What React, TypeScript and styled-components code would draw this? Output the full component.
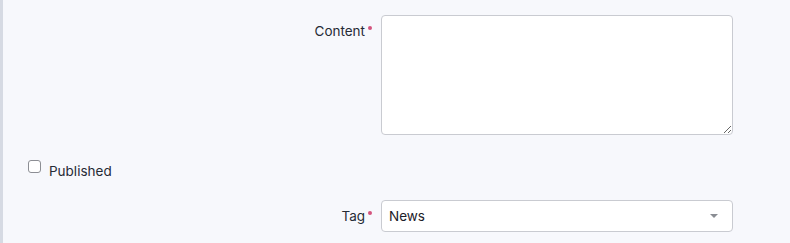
import styled, { createGlobalStyle } from 'styled-components';

const GlobalStyle = createGlobalStyle`
  html, body {
    margin: 0;
    padding: 0;
    background: #f7f8fc;
  }
  body {
    font-family: Inter, "Liberation Sans", sans-serif;
    color: #262b36;
  }
`;

type FieldProps = {
  label: string;
  required?: boolean;
  offset?: number;
  children: React.ReactNode;
};

const Field: React.FC<FieldProps> = ({ label, required, offset = 0, children }) => (
  <FieldRow $offset={offset}>
    <Label>
      {label}
      {required && <Required />}
    </Label>
    <Control>{children}</Control>
  </FieldRow>
);

const App = () => {
  return (
    <>
      <GlobalStyle />
      <Page>
        <Form>
          <Field label='Content' required>
            <TextArea />
          </Field>
          <CheckRow>
            <CheckBox type='checkbox' id='published' />
            <CheckLabel htmlFor='published'>Published</CheckLabel>
          </CheckRow>
          <Field label='Tag' required offset={20}>
            <SelectBox>
              <span>News</span>
              <Caret />
            </SelectBox>
          </Field>
        </Form>
      </Page>
    </>
  );
};

const Page = styled.div`
  min-height: 243px;
  border-left: 3px solid #d6dae3;
  box-sizing: border-box;
  background: #f7f8fc;
`;

const Form = styled.div`
  display: flex;
  flex-direction: column;
  padding-top: 15px;
`;

const FieldRow = styled.div<{ $offset: number }>`
  display: grid;
  grid-template-columns: 369px 352px;
  column-gap: 9px;
  align-items: start;
  margin-top: ${(p) => p.$offset}px;
`;

const Label = styled.div`
  display: flex;
  justify-content: flex-end;
  align-items: flex-start;
  padding-top: 8px;
  font-size: 13.5px;
  line-height: 16px;
`;

const Required = styled.span`
  display: inline-block;
  width: 4px;
  height: 4px;
  border-radius: 50%;
  background: #d4547e;
  margin-left: 3px;
  margin-top: 3px;
`;

const Control = styled.div`
  display: flex;
`;

const TextArea = styled.textarea`
  width: 352px;
  height: 120px;
  box-sizing: border-box;
  border: 1px solid #c9cbd1;
  border-radius: 4px;
  background: #fff;
  font-family: inherit;
  font-size: 13px;
  padding: 6px 8px;
  margin: 0;
  outline: none;
`;

const CheckRow = styled.div`
  display: flex;
  align-items: flex-start;
  gap: 8px;
  padding-left: 25px;
  margin-top: 25px;
  height: 20px;
`;

const CheckBox = styled.input`
  appearance: none;
  width: 13px;
  height: 13px;
  margin: 0;
  box-sizing: border-box;
  border: 1px solid #8c8e94;
  border-radius: 3px;
  background: #fff;
`;

const CheckLabel = styled.label`
  font-size: 13.5px;
  line-height: 16px;
  padding-top: 3px;
`;

const SelectBox = styled.div`
  width: 352px;
  height: 32px;
  box-sizing: border-box;
  border: 1px solid #c9cbd1;
  border-radius: 4px;
  background: #fff;
  display: flex;
  align-items: center;
  justify-content: space-between;
  padding: 0 14px 0 7px;
  font-size: 13.5px;
  color: #1c2029;
`;

const Caret = styled.span`
  width: 0;
  height: 0;
  border-left: 4px solid transparent;
  border-right: 4px solid transparent;
  border-top: 4px solid #8a8d93;
`;

export default App;
